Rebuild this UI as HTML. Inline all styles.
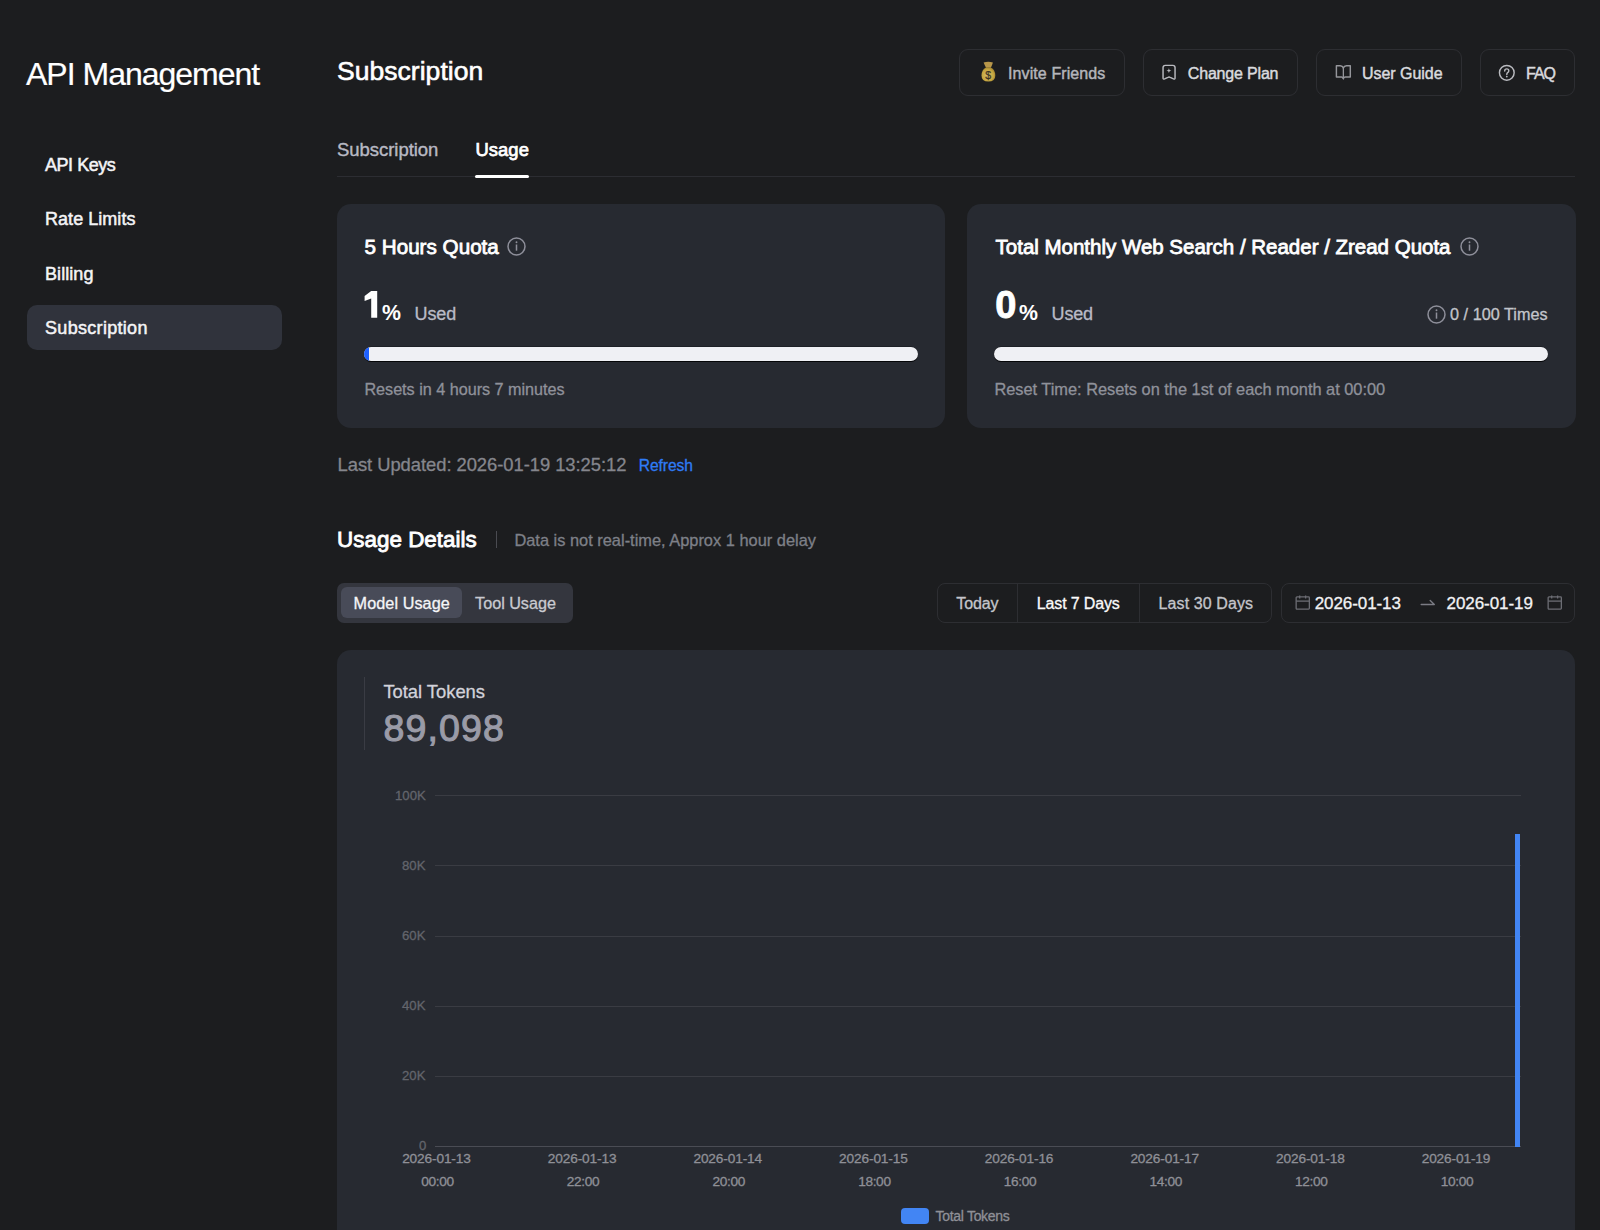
<!DOCTYPE html>
<html><head><meta charset="utf-8"><title>API Management</title>
<style>
html,body{margin:0;padding:0;}
body{width:1600px;height:1230px;overflow:hidden;background:#1c1d1f;position:relative;font-family:"Liberation Sans",sans-serif;}
.t{position:absolute;line-height:1;white-space:nowrap;}
.b{position:absolute;}
</style></head><body>
<div class="t" style="left:26.00px;top:57.91px;font-size:32px;color:#ffffff;letter-spacing:-1.000px;-webkit-text-stroke:0.2px #ffffff;">API Management</div>
<div class="b" style="left:27px;top:305px;width:255px;height:45px;background:#30333c;border-radius:10px;"></div>
<div class="t" style="left:45.00px;top:156.06px;font-size:18px;color:#f4f4f6;letter-spacing:-0.471px;-webkit-text-stroke:0.5px #f4f4f6;">API Keys</div>
<div class="t" style="left:45.00px;top:210.36px;font-size:18px;color:#f4f4f6;letter-spacing:0.040px;-webkit-text-stroke:0.5px #f4f4f6;">Rate Limits</div>
<div class="t" style="left:45.00px;top:264.66px;font-size:18px;color:#f4f4f6;letter-spacing:0.067px;-webkit-text-stroke:0.5px #f4f4f6;">Billing</div>
<div class="t" style="left:45.00px;top:318.96px;font-size:18px;color:#f4f4f6;letter-spacing:0.309px;-webkit-text-stroke:0.5px #f4f4f6;">Subscription</div>
<div class="t" style="left:337.00px;top:57.57px;font-size:26.5px;color:#ffffff;letter-spacing:0.036px;-webkit-text-stroke:0.6px #ffffff;">Subscription</div>
<div class="b" style="left:959px;top:49px;width:166px;height:47px;box-sizing:border-box;border:1px solid #2d2e32;border-radius:9px;"></div>
<div class="b" style="left:1143px;top:49px;width:155px;height:47px;box-sizing:border-box;border:1px solid #2d2e32;border-radius:9px;"></div>
<div class="b" style="left:1316px;top:49px;width:146px;height:47px;box-sizing:border-box;border:1px solid #2d2e32;border-radius:9px;"></div>
<div class="b" style="left:1480px;top:49px;width:95px;height:47px;box-sizing:border-box;border:1px solid #2d2e32;border-radius:9px;"></div>
<div class="t" style="left:1008.00px;top:65.86px;font-size:16px;color:#b4b5ba;letter-spacing:0.100px;-webkit-text-stroke:0.45px #b4b5ba;">Invite Friends</div>
<div class="t" style="left:1187.80px;top:65.86px;font-size:16px;color:#d9dade;letter-spacing:-0.180px;-webkit-text-stroke:0.45px #d9dade;">Change Plan</div>
<div class="t" style="left:1362.00px;top:65.86px;font-size:16px;color:#d9dade;letter-spacing:-0.044px;-webkit-text-stroke:0.45px #d9dade;">User Guide</div>
<div class="t" style="left:1526.00px;top:65.86px;font-size:16px;color:#d9dade;letter-spacing:-1.000px;-webkit-text-stroke:0.45px #d9dade;">FAQ</div>
<svg class="b" style="left:979px;top:60px" width="20" height="24" viewBox="0 0 20 24">
<defs><radialGradient id="bag" cx="0.45" cy="0.55" r="0.6"><stop offset="0" stop-color="#d6c06a"/><stop offset="0.7" stop-color="#c4a540"/><stop offset="1" stop-color="#9c7f2a"/></radialGradient></defs>
<path d="M4.6 2.4 Q9.2 1.0 13.9 2.4 Q13 5.2 11.9 7.8 H7 Q5.8 5.2 4.6 2.4 Z" fill="#b8974a"/>
<path d="M7 7.6 Q2.6 9.8 2.5 15.5 Q2.4 21.6 9.4 21.6 Q16.4 21.6 16.3 15.5 Q16.2 9.8 11.9 7.6 Z" fill="url(#bag)"/>
<text x="9.1" y="19.3" text-anchor="middle" font-family="Liberation Sans" font-size="10.5" fill="#3a3124" stroke="#3a3124" stroke-width="0.25">$</text>
</svg>
<svg class="b" style="left:1160px;top:63px" width="18" height="19" viewBox="0 0 18 19">
<path d="M3.05 4.6 Q3.05 2.35 5.3 2.35 H12.8 Q15.05 2.35 15.05 4.6 V14.9 Q15.05 16.6 13.5 15.9 L10.2 14.3 Q9.05 13.7 7.9 14.3 L4.6 15.9 Q3.05 16.6 3.05 14.9 Z" fill="none" stroke="#b9babf" stroke-width="1.45" stroke-linejoin="round"/>
<path d="M8.9 5.3 L9.55 7.05 L11.3 7.7 L9.55 8.35 L8.9 10.1 L8.25 8.35 L6.5 7.7 L8.25 7.05 Z" fill="#b9babf"/>
</svg>
<svg class="b" style="left:1334px;top:63px" width="19" height="19" viewBox="0 0 19 19">
<path d="M9.35 5 Q8.6 2.8 6.2 2.8 H2.4 V13.9 H7.4 Q8.9 13.9 9.35 15.6 Q9.8 13.9 11.3 13.9 H16.3 V2.8 H12.5 Q10.1 2.8 9.35 5 Z" fill="none" stroke="#95969b" stroke-width="1.45" stroke-linejoin="round"/>
<path d="M9.35 5 V15.6" stroke="#95969b" stroke-width="1.3"/>
<path d="M8.2 14.6 L9.35 17 L10.5 14.6 Z" fill="#95969b"/>
</svg>
<svg class="b" style="left:1497px;top:63px" width="19" height="19" viewBox="0 0 19 19">
<circle cx="9.8" cy="9.8" r="7.35" fill="none" stroke="#b9babf" stroke-width="1.45"/>
<path d="M7.7 8 Q7.7 5.9 9.8 5.9 Q11.8 5.9 11.8 7.8 Q11.8 9 10.6 9.7 Q9.8 10.2 9.8 11.6" fill="none" stroke="#b9babf" stroke-width="1.4" stroke-linecap="round"/>
<circle cx="9.8" cy="13.6" r="0.9" fill="#b9babf"/>
</svg>
<div class="b" style="left:337px;top:176px;width:1238px;height:1px;background:#2c2d32;"></div>
<div class="t" style="left:337.00px;top:141.34px;font-size:18.5px;color:#b8b9c3;letter-spacing:-0.036px;-webkit-text-stroke:0.4px #b8b9c3;">Subscription</div>
<div class="t" style="left:475.50px;top:141.42px;font-size:18.4px;color:#ffffff;letter-spacing:0.050px;-webkit-text-stroke:0.75px #ffffff;">Usage</div>
<div class="b" style="left:475px;top:174.5px;width:54px;height:3px;background:#fff;border-radius:2px;"></div>
<div class="b" style="left:336.5px;top:204.2px;width:608.3px;height:224.2px;background:#272a31;border-radius:14px;"></div>
<div class="b" style="left:967.3px;top:204.2px;width:608.3px;height:224.2px;background:#272a31;border-radius:14px;"></div>
<div class="t" style="left:364.50px;top:236.56px;font-size:20.6px;color:#ffffff;letter-spacing:0.033px;-webkit-text-stroke:0.8px #ffffff;">5 Hours Quota</div>
<svg class="b" style="left:507.3px;top:237.4px" width="19.0" height="19.0" viewBox="0 0 19.0 19.0">
<circle cx="9.5" cy="9.5" r="8.5" fill="none" stroke="#8e8f9a" stroke-width="1.5"/>
<rect x="8.75" y="7.50" width="1.5" height="6.2" fill="#8e8f9a"/>
<circle cx="9.5" cy="5.20" r="0.95" fill="#8e8f9a"/>
</svg>
<svg class="b" style="left:364px;top:291px" width="14" height="27" viewBox="0 0 14 27"><path d="M7.2 0 H13.2 V26.8 H7.2 V7.4 L0.6 10.1 V5.0 Z" fill="#fff"/></svg>
<div class="t" style="left:381.90px;top:302.57px;font-size:21.3px;color:#ffffff;font-weight:700;">%</div>
<div class="t" style="left:414.50px;top:304.76px;font-size:18px;color:#b9bac6;letter-spacing:-0.100px;-webkit-text-stroke:0.3px #b9bac6;">Used</div>
<div class="b" style="left:363.5px;top:346.5px;width:554.5px;height:14.2px;background:#eff0f4;border-radius:7.1px;overflow:hidden;box-shadow:0 1px 0 #050608,0 -0.6px 0 #15171c;"><div style="position:absolute;left:0;top:0;width:5.6px;height:100%;background:#1d60ff;"></div></div>
<div class="t" style="left:364.40px;top:381.29px;font-size:16.2px;color:#8f919a;letter-spacing:-0.015px;-webkit-text-stroke:0.3px #8f919a;">Resets in 4 hours 7 minutes</div>
<div class="t" style="left:995.60px;top:236.65px;font-size:20.5px;color:#ffffff;letter-spacing:-0.011px;-webkit-text-stroke:0.8px #ffffff;">Total Monthly Web Search / Reader / Zread Quota</div>
<svg class="b" style="left:1460.0px;top:237.1px" width="19.0" height="19.0" viewBox="0 0 19.0 19.0">
<circle cx="9.5" cy="9.5" r="8.5" fill="none" stroke="#8e8f9a" stroke-width="1.5"/>
<rect x="8.75" y="7.50" width="1.5" height="6.2" fill="#8e8f9a"/>
<circle cx="9.5" cy="5.20" r="0.95" fill="#8e8f9a"/>
</svg>
<div class="t" style="left:995.30px;top:286.13px;font-size:38px;color:#ffffff;font-weight:700;-webkit-text-stroke:0.9px #ffffff;">0</div>
<div class="t" style="left:1019.00px;top:302.57px;font-size:21.3px;color:#ffffff;font-weight:700;">%</div>
<div class="t" style="left:1051.60px;top:304.76px;font-size:18px;color:#b9bac6;letter-spacing:-0.167px;-webkit-text-stroke:0.3px #b9bac6;">Used</div>
<svg class="b" style="left:1426.6px;top:304.9px" width="19.0" height="19.0" viewBox="0 0 19.0 19.0">
<circle cx="9.5" cy="9.5" r="8.5" fill="none" stroke="#8e8f9a" stroke-width="1.5"/>
<rect x="8.75" y="7.50" width="1.5" height="6.2" fill="#8e8f9a"/>
<circle cx="9.5" cy="5.20" r="0.95" fill="#8e8f9a"/>
</svg>
<div class="t" style="left:1450.00px;top:306.49px;font-size:16.2px;color:#c3c5cb;letter-spacing:0.033px;-webkit-text-stroke:0.3px #c3c5cb;">0 / 100 Times</div>
<div class="b" style="left:994.4px;top:346.5px;width:554px;height:14.2px;background:#eff0f4;border-radius:7.1px;box-shadow:0 1px 0 #050608,0 -0.6px 0 #15171c;"></div>
<div class="t" style="left:994.40px;top:380.92px;font-size:16.4px;color:#8f919a;letter-spacing:-0.020px;-webkit-text-stroke:0.3px #8f919a;">Reset Time: Resets on the 1st of each month at 00:00</div>
<div class="t" style="left:337.60px;top:455.52px;font-size:18.4px;color:#85868d;letter-spacing:-0.050px;-webkit-text-stroke:0.3px #85868d;">Last Updated: 2026-01-19 13:25:12</div>
<div class="t" style="left:638.80px;top:457.89px;font-size:15.6px;color:#2f7cf6;letter-spacing:-0.067px;-webkit-text-stroke:0.3px #2f7cf6;">Refresh</div>
<div class="t" style="left:337.00px;top:528.54px;font-size:22.4px;color:#ffffff;letter-spacing:0.033px;-webkit-text-stroke:0.85px #ffffff;">Usage Details</div>
<div class="b" style="left:495.5px;top:530.5px;width:1px;height:17.5px;background:#4a4b51;"></div>
<div class="t" style="left:514.40px;top:531.72px;font-size:16.4px;color:#7e8088;-webkit-text-stroke:0.3px #7e8088;">Data is not real-time, Approx 1 hour delay</div>
<div class="b" style="left:337px;top:582.5px;width:236px;height:40.5px;background:#34363e;border-radius:7px;"></div>
<div class="b" style="left:341px;top:586.7px;width:121px;height:31.8px;background:#484b58;border-radius:6px;"></div>
<div class="t" style="left:353.60px;top:595.09px;font-size:16.2px;color:#f5f5f7;letter-spacing:0.080px;-webkit-text-stroke:0.3px #f5f5f7;">Model Usage</div>
<div class="t" style="left:475.10px;top:595.09px;font-size:16.2px;color:#c9cad0;letter-spacing:-0.022px;-webkit-text-stroke:0.3px #c9cad0;">Tool Usage</div>
<div class="b" style="left:937px;top:583px;width:335px;height:39.5px;box-sizing:border-box;border:1px solid #2d2e32;border-radius:8px;"></div>
<div class="b" style="left:1017px;top:583px;width:1px;height:39.5px;background:#2d2e32;"></div>
<div class="b" style="left:1139px;top:583px;width:1px;height:39.5px;background:#2d2e32;"></div>
<div class="t" style="left:956.30px;top:596.16px;font-size:16px;color:#c4c5cb;letter-spacing:-0.100px;-webkit-text-stroke:0.3px #c4c5cb;">Today</div>
<div class="t" style="left:1036.80px;top:596.16px;font-size:16px;color:#fafafa;letter-spacing:-0.150px;-webkit-text-stroke:0.3px #fafafa;">Last 7 Days</div>
<div class="t" style="left:1158.60px;top:596.16px;font-size:16px;color:#c4c5cb;letter-spacing:0.100px;-webkit-text-stroke:0.3px #c4c5cb;">Last 30 Days</div>
<div class="b" style="left:1281px;top:583px;width:294px;height:39.5px;box-sizing:border-box;border:1px solid #2d2e32;border-radius:8px;"></div>
<svg class="b" style="left:1294.5px;top:595px" width="16" height="16" viewBox="0 0 16 16">
<rect x="1.15" y="1.95" width="13.2" height="12.2" rx="0.8" fill="none" stroke="#6c6d74" stroke-width="1.3"/>
<path d="M1.15 6.1 H14.35" stroke="#6c6d74" stroke-width="1.3"/>
<path d="M4.7 0.4 V3.4 M10.6 0.4 V3.4" stroke="#6c6d74" stroke-width="1.3"/>
</svg>
<svg class="b" style="left:1546.7px;top:595px" width="16" height="16" viewBox="0 0 16 16">
<rect x="1.15" y="1.95" width="13.2" height="12.2" rx="0.8" fill="none" stroke="#6c6d74" stroke-width="1.3"/>
<path d="M1.15 6.1 H14.35" stroke="#6c6d74" stroke-width="1.3"/>
<path d="M4.7 0.4 V3.4 M10.6 0.4 V3.4" stroke="#6c6d74" stroke-width="1.3"/>
</svg>
<div class="t" style="left:1314.70px;top:595.21px;font-size:17px;color:#f2f2f4;letter-spacing:-0.078px;-webkit-text-stroke:0.3px #f2f2f4;">2026-01-13</div>
<div class="t" style="left:1446.50px;top:595.21px;font-size:17px;color:#f2f2f4;letter-spacing:-0.056px;-webkit-text-stroke:0.3px #f2f2f4;">2026-01-19</div>
<svg class="b" style="left:1420px;top:598px" width="16" height="10" viewBox="0 0 16 10">
<path d="M1.2 6.5 H14.3 L10.2 2.6" fill="none" stroke="#7b7c84" stroke-width="1.4" stroke-linecap="round" stroke-linejoin="round"/>
</svg>
<div class="b" style="left:336.6px;top:650.2px;width:1238.6px;height:620px;background:#272a31;border-radius:14px;"></div>
<div class="b" style="left:364px;top:677px;width:1px;height:73px;background:#3a3c44;"></div>
<div class="t" style="left:383.40px;top:683.02px;font-size:18.4px;color:#d2d2da;letter-spacing:-0.027px;-webkit-text-stroke:0.3px #d2d2da;">Total Tokens</div>
<div class="t" style="left:383.40px;top:709.66px;font-size:37.5px;color:#9a9ba7;letter-spacing:1.160px;-webkit-text-stroke:1.1px #9a9ba7;">89,098</div>
<div class="b" style="left:435.2px;top:795.1px;width:1085.6px;height:1px;background:#3a3c43;"></div>
<div class="b" style="left:435.2px;top:865.3px;width:1085.6px;height:1px;background:#3a3c43;"></div>
<div class="b" style="left:435.2px;top:935.5px;width:1085.6px;height:1px;background:#3a3c43;"></div>
<div class="b" style="left:435.2px;top:1005.8px;width:1085.6px;height:1px;background:#3a3c43;"></div>
<div class="b" style="left:435.2px;top:1076.0px;width:1085.6px;height:1px;background:#3a3c43;"></div>
<div class="b" style="left:435.2px;top:1146px;width:1085.6px;height:1.2px;background:#4a4c54;"></div>
<div class="t" style="left:395.00px;top:788.63px;font-size:13.2px;color:#63656c;-webkit-text-stroke:0.3px #63656c;">100K</div>
<div class="t" style="left:402.00px;top:858.73px;font-size:13.2px;color:#63656c;-webkit-text-stroke:0.3px #63656c;">80K</div>
<div class="t" style="left:402.00px;top:928.83px;font-size:13.2px;color:#63656c;-webkit-text-stroke:0.3px #63656c;">60K</div>
<div class="t" style="left:402.00px;top:998.93px;font-size:13.2px;color:#63656c;-webkit-text-stroke:0.3px #63656c;">40K</div>
<div class="t" style="left:402.00px;top:1069.03px;font-size:13.2px;color:#63656c;-webkit-text-stroke:0.3px #63656c;">20K</div>
<div class="t" style="left:419.00px;top:1139.13px;font-size:13.2px;color:#63656c;-webkit-text-stroke:0.3px #63656c;">0</div>
<div class="t" style="left:402.15px;top:1152.40px;font-size:13.7px;color:#8f9097;letter-spacing:-0.144px;-webkit-text-stroke:0.3px #8f9097;">2026-01-13</div>
<div class="t" style="left:421.20px;top:1175.00px;font-size:13.7px;color:#8f9097;letter-spacing:-0.350px;-webkit-text-stroke:0.3px #8f9097;">00:00</div>
<div class="t" style="left:547.80px;top:1152.40px;font-size:13.7px;color:#8f9097;letter-spacing:-0.144px;-webkit-text-stroke:0.3px #8f9097;">2026-01-13</div>
<div class="t" style="left:566.85px;top:1175.00px;font-size:13.7px;color:#8f9097;letter-spacing:-0.350px;-webkit-text-stroke:0.3px #8f9097;">22:00</div>
<div class="t" style="left:693.45px;top:1152.40px;font-size:13.7px;color:#8f9097;letter-spacing:-0.144px;-webkit-text-stroke:0.3px #8f9097;">2026-01-14</div>
<div class="t" style="left:712.50px;top:1175.00px;font-size:13.7px;color:#8f9097;letter-spacing:-0.350px;-webkit-text-stroke:0.3px #8f9097;">20:00</div>
<div class="t" style="left:839.10px;top:1152.40px;font-size:13.7px;color:#8f9097;letter-spacing:-0.144px;-webkit-text-stroke:0.3px #8f9097;">2026-01-15</div>
<div class="t" style="left:858.15px;top:1175.00px;font-size:13.7px;color:#8f9097;letter-spacing:-0.350px;-webkit-text-stroke:0.3px #8f9097;">18:00</div>
<div class="t" style="left:984.75px;top:1152.40px;font-size:13.7px;color:#8f9097;letter-spacing:-0.144px;-webkit-text-stroke:0.3px #8f9097;">2026-01-16</div>
<div class="t" style="left:1003.80px;top:1175.00px;font-size:13.7px;color:#8f9097;letter-spacing:-0.350px;-webkit-text-stroke:0.3px #8f9097;">16:00</div>
<div class="t" style="left:1130.40px;top:1152.40px;font-size:13.7px;color:#8f9097;letter-spacing:-0.144px;-webkit-text-stroke:0.3px #8f9097;">2026-01-17</div>
<div class="t" style="left:1149.45px;top:1175.00px;font-size:13.7px;color:#8f9097;letter-spacing:-0.350px;-webkit-text-stroke:0.3px #8f9097;">14:00</div>
<div class="t" style="left:1276.05px;top:1152.40px;font-size:13.7px;color:#8f9097;letter-spacing:-0.144px;-webkit-text-stroke:0.3px #8f9097;">2026-01-18</div>
<div class="t" style="left:1295.10px;top:1175.00px;font-size:13.7px;color:#8f9097;letter-spacing:-0.350px;-webkit-text-stroke:0.3px #8f9097;">12:00</div>
<div class="t" style="left:1421.70px;top:1152.40px;font-size:13.7px;color:#8f9097;letter-spacing:-0.144px;-webkit-text-stroke:0.3px #8f9097;">2026-01-19</div>
<div class="t" style="left:1440.75px;top:1175.00px;font-size:13.7px;color:#8f9097;letter-spacing:-0.350px;-webkit-text-stroke:0.3px #8f9097;">10:00</div>
<div class="b" style="left:1515px;top:833.5px;width:5px;height:313px;background:#4285f4;"></div>
<div class="b" style="left:901px;top:1208.3px;width:28px;height:15.7px;background:#4285f4;border-radius:4px;"></div>
<div class="t" style="left:935.60px;top:1208.65px;font-size:14px;color:#8f9097;letter-spacing:-0.309px;-webkit-text-stroke:0.3px #8f9097;">Total Tokens</div>
</body></html>
